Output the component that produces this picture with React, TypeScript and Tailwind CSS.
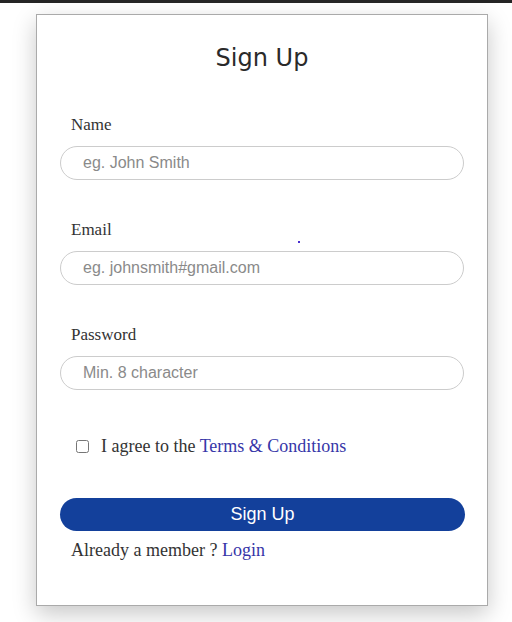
import React from 'react';

const serif = { fontFamily: '"Liberation Serif", "Times New Roman", serif' };

function Field({ label, placeholder, type = 'text' }: { label: string; placeholder: string; type?: string }) {
  return (
    <div className="flex flex-col">
      <label className="pl-[11px] text-[17px] leading-[20px] text-[#333]" style={serif}>
        {label}
      </label>
      <input
        type={type}
        placeholder={placeholder}
        className="mt-[11px] h-[34px] w-full rounded-full border border-[#cccccc] bg-white px-[22px] text-[16px] text-[#333] outline-none placeholder:text-[#8a8a8a] font-['Liberation_Sans',Arial,sans-serif]"
      />
    </div>
  );
}

export default function App() {
  return (
    <div className="min-h-[622px] bg-white">
      <div className="h-[3px] bg-[#252525]" />
      <div className="relative ml-[36px] mt-[11px] flex h-[592px] w-[452px] flex-col border border-[#aaaaaa] bg-white px-[23px] shadow-[0_8px_22px_rgba(0,0,0,0.22)]">
        <h1 className="mt-[27px] text-center text-[24px] leading-[32px] text-[#2a2a2a] font-['Comic_Sans_MS','DejaVu_Sans',sans-serif]">
          Sign Up
        </h1>

        <div className="mt-[41px] flex flex-col gap-[40px]">
          <Field label="Name" placeholder="eg. John Smith" />
          <Field label="Email" placeholder="eg. johnsmith#gmail.com" type="email" />
          <Field label="Password" placeholder="Min. 8 character" type="password" />
        </div>

        <div className="mt-[46px] flex items-center pl-[16px] text-[18px] leading-[20px] text-[#333]" style={serif}>
          <input type="checkbox" className="h-[13px] w-[13px] accent-[#13409b]" />
          <span className="ml-[12px]">
            I agree to the <a className="text-[#3636a8]">Terms &amp; Conditions</a>
          </span>
        </div>

        <button className="mt-[42px] h-[33px] w-[405px] rounded-full bg-[#13409b] text-[18px] text-white font-['Liberation_Sans',Arial,sans-serif]">
          Sign Up
        </button>

        <p className="mt-[9px] pl-[11px] text-[18px] leading-[20px] text-[#333]" style={serif}>
          Already a member ? <a className="text-[#3636a8]">Login</a>
        </p>

        <span className="absolute left-[261px] top-[226px] h-[2px] w-[2px] bg-[#4a2fd0]" />
      </div>
    </div>
  );
}
